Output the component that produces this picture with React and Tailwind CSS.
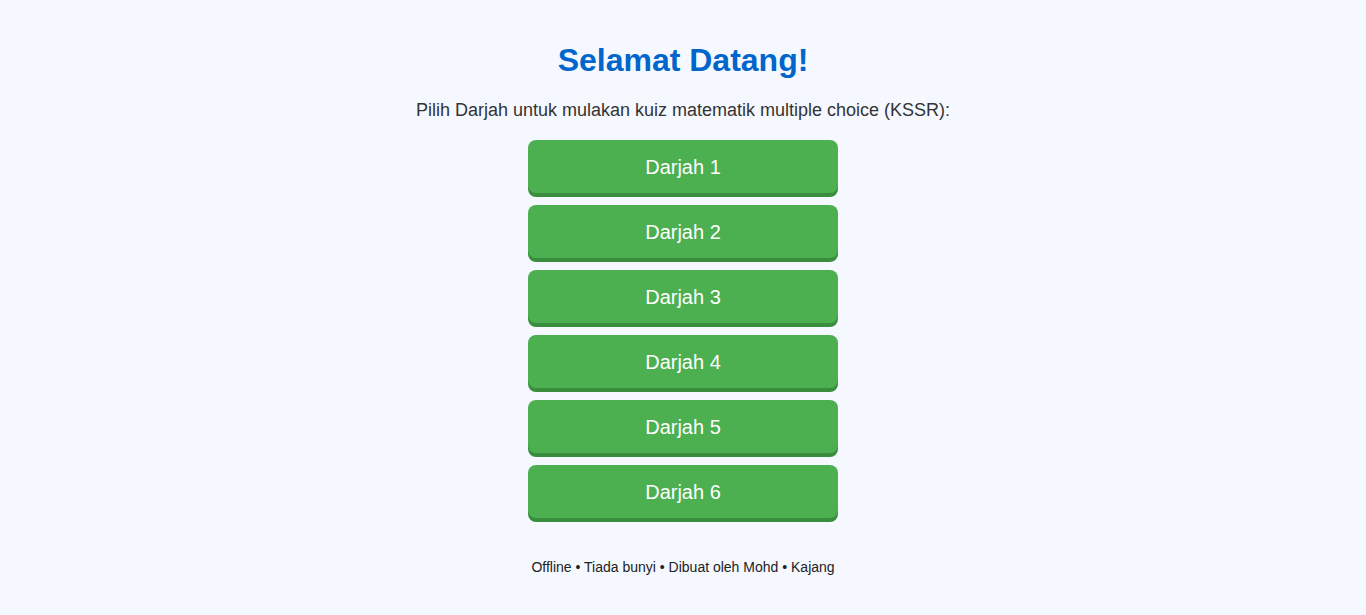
export default function App() {
  const grades = [1, 2, 3, 4, 5, 6];

  return (
    <div className="min-h-screen bg-[#f5f9ff] font-['Liberation_Sans',Arial,sans-serif] text-[#333] flex flex-col items-center pt-[42px]">
      <h1 className="text-[32px] leading-[37px] font-bold text-[#0066cc]">Selamat Datang!</h1>
      <p className="mt-[21px] text-[18px] leading-[21px]">
        Pilih Darjah untuk mulakan kuiz matematik multiple choice (KSSR):
      </p>

      <div className="mt-[19px] flex flex-col gap-[12px]">
        {grades.map((g) => (
          <button
            key={g}
            className="w-[310px] h-[53px] rounded-lg bg-[#4caf50] text-white text-[20px] shadow-[0_4px_0_#388e3c] cursor-pointer"
          >
            Darjah {g}
          </button>
        ))}
      </div>

      <p className="mt-[41px] text-[14px] leading-4 text-[#222]">
        Offline • Tiada bunyi • Dibuat oleh Mohd • Kajang
      </p>
    </div>
  );
}
